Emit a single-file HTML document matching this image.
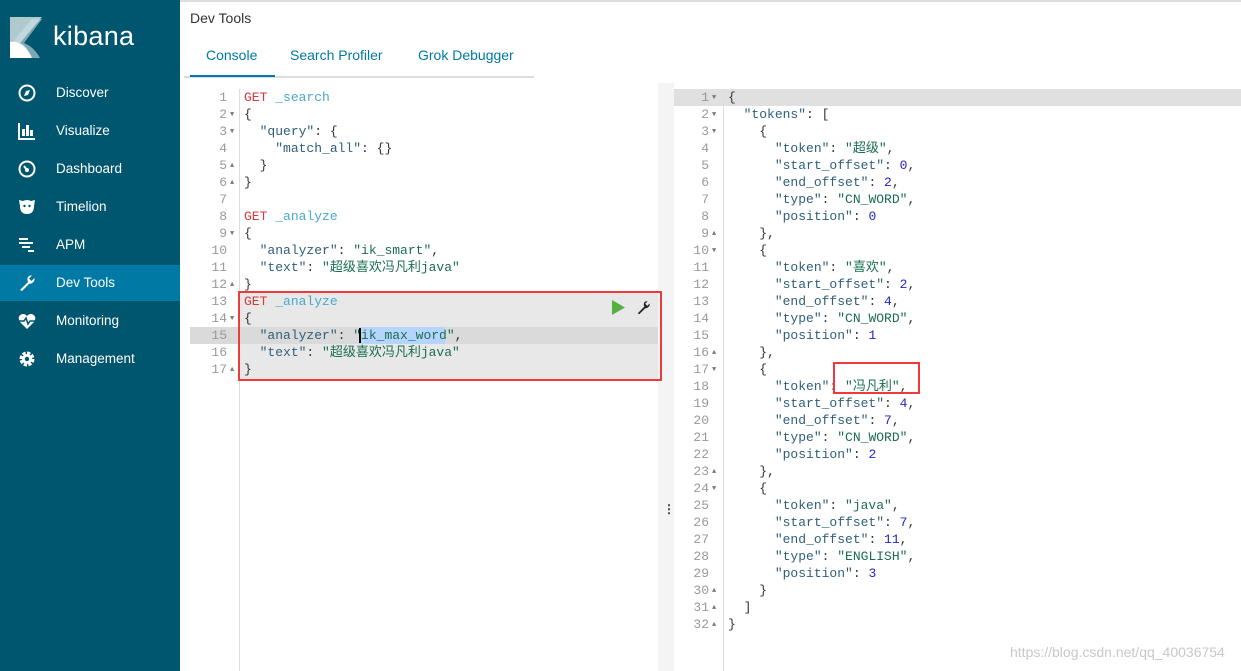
<!DOCTYPE html>
<html><head><meta charset="utf-8"><style>
*{margin:0;padding:0;box-sizing:border-box}
body{width:1241px;height:671px;overflow:hidden;background:#fff;font-family:"Liberation Sans",sans-serif;position:relative}
.side{position:absolute;left:0;top:0;width:180px;height:671px;background:#00556f}
.nav{position:absolute;left:0;width:180px;height:36px;color:#fff;font-size:13.5px;line-height:36px;padding-left:56px}
.nav svg{position:absolute;left:18px;top:9px}
.act{background:#0079a5}
.mono{font-family:"Liberation Mono","Noto Sans CJK SC",monospace;font-size:13px}
.ln{position:absolute;height:17px;line-height:17px;white-space:pre;color:#333}
.num{position:absolute;height:17px;line-height:17px;text-align:right;color:#999;font-family:"Liberation Mono",monospace;font-size:13px}
.k{color:#2f5f7a}.s{color:#1a6e4e}.n{color:#2323c8}.g{color:#d73a3a}.u{color:#47a9cc}
.ar{font-size:7px;color:#777;position:absolute}
</style></head><body>
<div style="position:absolute;left:0;top:0;width:1241px;height:2px;background:#ddd"></div>
<div class="side">
<svg style="position:absolute;left:10px;top:17px" width="32" height="41" viewBox="0 0 32 41"><polygon points="0,0 32,0 0,38" fill="#b0c9cf"/><path d="M0,25 Q14,22 22,41 L0,41 Z" fill="#fff"/><path d="M5,22 L22,2 L32,2 L14,26 Q24,30 30,41 L22,41 Q15,28 5,25Z" fill="#cfe0e3" opacity=".6"/></svg>
<div style="position:absolute;left:53px;top:21px;color:#fff;font-size:27px;letter-spacing:.3px">kibana</div>
<div class="nav" style="top:75px"><svg width="18" height="18" viewBox="0 0 18 18"><circle cx="9" cy="9" r="7.5" fill="none" stroke="#fff" stroke-width="2"/><path d="M6 12 L8 7 L12 6 L10 11Z" fill="#fff"/></svg>Discover</div>
<div class="nav" style="top:113px"><svg width="18" height="18" viewBox="0 0 18 18"><path d="M1 1V17H17" fill="none" stroke="#fff" stroke-width="2"/><rect x="4" y="7" width="3" height="7" fill="#fff"/><rect x="8" y="3" width="3" height="11" fill="#fff"/><rect x="12" y="8" width="3" height="6" fill="#fff"/></svg>Visualize</div>
<div class="nav" style="top:151px"><svg width="18" height="18" viewBox="0 0 18 18"><circle cx="9" cy="9" r="7.5" fill="none" stroke="#fff" stroke-width="2"/><circle cx="9" cy="10" r="2" fill="#fff"/><path d="M9 10 L6 6" stroke="#fff" stroke-width="2"/></svg>Dashboard</div>
<div class="nav" style="top:189px"><svg width="18" height="18" viewBox="0 0 18 18"><path d="M1 2 L5 3 Q9 1 13 3 L17 2 L16 8 Q16 16 9 16 Q2 16 2 8Z" fill="#fff"/><circle cx="6.5" cy="8" r="1.2" fill="#00556f"/><circle cx="11.5" cy="8" r="1.2" fill="#00556f"/></svg>Timelion</div>
<div class="nav" style="top:227px"><svg width="18" height="18" viewBox="0 0 18 18"><rect x="1" y="2" width="9" height="2" fill="#fff"/><rect x="1" y="6" width="14" height="2" fill="#fff"/><rect x="4" y="10" width="8" height="2" fill="#fff"/><rect x="10" y="14" width="6" height="2" fill="#fff"/></svg>APM</div>
<div class="nav act" style="top:265px"><svg width="18" height="18" viewBox="0 0 18 18"><path d="M2 16 L10 8 Q8 3 12 1.5 L14 1.5 L11 4.5 L13.5 7 L16.5 4 Q17 9 11 10 L4 17Z" fill="#fff"/></svg>Dev Tools</div>
<div class="nav" style="top:303px"><svg width="18" height="18" viewBox="0 0 18 18"><path d="M9 17 L2 10 Q-1 5 3 2.5 Q6.5 1 9 4 Q11.5 1 15 2.5 Q19 5 16 10Z" fill="#fff"/><path d="M1 9 H6 L8 6 L10 12 L12 9 H17" fill="none" stroke="#00556f" stroke-width="1.5"/></svg>Monitoring</div>
<div class="nav" style="top:341px"><svg width="18" height="18" viewBox="0 0 18 18"><circle cx="9" cy="9" r="5.5" fill="none" stroke="#fff" stroke-width="4" stroke-dasharray="3 1.3"/><circle cx="9" cy="9" r="5" fill="#fff"/><circle cx="9" cy="9" r="2.2" fill="#00556f"/></svg>Management</div>
</div>
<div style="position:absolute;left:190px;top:10px;font-size:14px;color:#333">Dev Tools</div>
<div style="position:absolute;left:206px;top:47px;font-size:14px;color:#0079a5">Console</div>
<div style="position:absolute;left:290px;top:47px;font-size:14px;color:#0079a5">Search Profiler</div>
<div style="position:absolute;left:418px;top:47px;font-size:14px;color:#0079a5">Grok Debugger</div>
<div style="position:absolute;left:184px;top:76px;width:350px;height:2px;background:#ddd"></div>
<div style="position:absolute;left:190px;top:75px;width:85px;height:2px;background:#0079a5"></div>

<!-- left editor -->
<div style="position:absolute;left:239px;top:89px;width:1px;height:582px;background:#ddd"></div>
<div style="position:absolute;left:240px;top:293px;width:418px;height:87px;background:#e8e8e8"></div>
<div style="position:absolute;left:190px;top:327px;width:468px;height:17px;background:#dadada"></div>
<div style="position:absolute;left:360px;top:327px;width:85px;height:17px;background:#b5d5ff"></div>
<div style="position:absolute;left:658px;top:83px;width:16px;height:588px;background:#f4f4f4"></div>
<div style="position:absolute;left:663px;top:502px;color:#333;font-size:12px;font-weight:bold">⋮</div>
<div style="position:absolute;left:238px;top:291px;width:424px;height:90px;border:2.5px solid #f03a3a"></div>
<svg style="position:absolute;left:612px;top:300px" width="13" height="15"><polygon points="0,0 13,7.5 0,15" fill="#54b03f"/></svg>
<svg style="position:absolute;left:636px;top:300px" width="15" height="15" viewBox="0 0 18 18"><path d="M2 16 L10 8 Q8 3 12 1.5 L14 1.5 L11 4.5 L13.5 7 L16.5 4 Q17 9 11 10 L4 17Z" fill="#222"/></svg>
<div class="mono" id="L"></div>
<div style="position:absolute;left:359px;top:328px;width:2px;height:15px;background:#000"></div>

<!-- right editor -->
<div style="position:absolute;left:674px;top:89px;width:567px;height:17px;background:#e0e0e0"></div>
<div style="position:absolute;left:723px;top:89px;width:1px;height:582px;background:#ddd"></div>
<div class="mono" id="R"></div>
<div style="position:absolute;left:833px;top:362px;width:87px;height:32px;border:2.5px solid #f03a3a"></div>
<div style="position:absolute;left:1010px;top:644px;color:#c8c8c8;font-size:14px">https://blog.csdn.net/qq_40036754</div>

<script>
function build(id,gx,cx,lines,folds){var h='';lines.forEach(function(t,i){var y=89+17*i;
h+='<div class="num" style="left:'+(gx-40)+'px;top:'+y+'px;width:40px">'+(i+1)+'</div>';
if(folds[i+1])h+='<div class="ar" style="left:'+(gx+3)+'px;top:'+(y+5)+'px">'+folds[i+1]+'</div>';
h+='<div class="ln" style="left:'+cx+'px;top:'+y+'px">'+t+'</div>';});
var d=document.getElementById(id);d.innerHTML=h;d.style.position='absolute';d.style.left='0';d.style.top='0';}
var K=function(s){return '<span class="k">"'+s+'"</span>'},S=function(s){return '<span class="s">"'+s+'"</span>'},N=function(s){return '<span class="n">'+s+'</span>'};
var CJ='<span class="s">"超级喜欢冯凡利java"</span>';
build('L',227,244,[
'<span class="g">GET</span> <span class="u">_search</span>','{','  '+K('query')+': {','    '+K('match_all')+': {}','  }','}','',
'<span class="g">GET</span> <span class="u">_analyze</span>','{','  '+K('analyzer')+': '+S('ik_smart')+',','  '+K('text')+': '+CJ,'}',
'<span class="g">GET</span> <span class="u">_analyze</span>','{','  '+K('analyzer')+': '+S('ik_max_word')+',','  '+K('text')+': '+CJ,'}'],
{2:'▼',3:'▼',5:'▲',6:'▲',9:'▼',12:'▲',14:'▼',17:'▲'});
var R=['{','  '+K('tokens')+': ['];
var toks=[['超级',0,2,'CN_WORD',0],['喜欢',2,4,'CN_WORD',1],['冯凡利',4,7,'CN_WORD',2],['java',7,11,'ENGLISH',3]];
toks.forEach(function(t,i){R.push('    {');R.push('      '+K('token')+': '+S(t[0])+',');R.push('      '+K('start_offset')+': '+N(t[1])+',');R.push('      '+K('end_offset')+': '+N(t[2])+',');R.push('      '+K('type')+': '+S(t[3])+',');R.push('      '+K('position')+': '+N(t[4]));R.push('    }'+(i<3?',':''));});
R.push('  ]');R.push('}');
build('R',709,728,R,{1:'▼',2:'▼',3:'▼',9:'▲',10:'▼',16:'▲',17:'▼',23:'▲',24:'▼',30:'▲',31:'▲',32:'▲'});
</script>
</body></html>
